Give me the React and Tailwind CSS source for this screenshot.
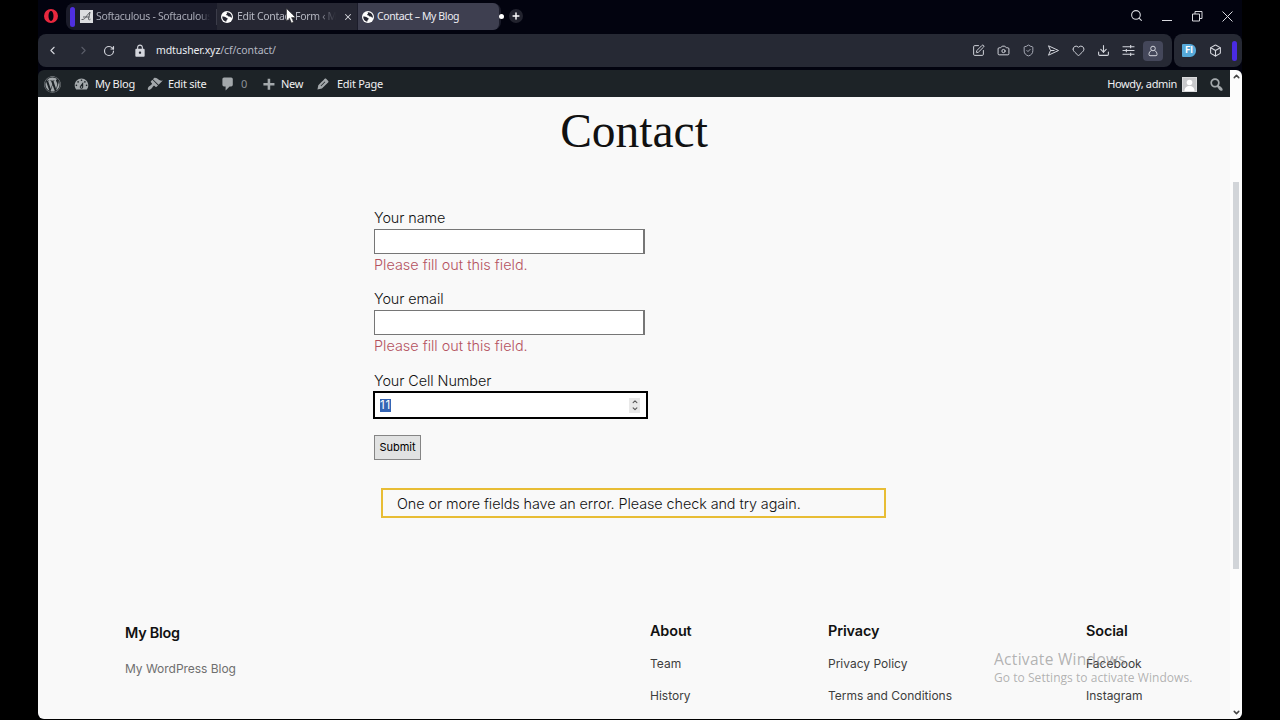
import { FaWordpress } from 'react-icons/fa';
import { MdLock } from 'react-icons/md';
import { Search, ChevronLeft, ChevronRight, RotateCw, Camera, ShieldCheck, Heart, Download, Box, X, Plus, SquarePen, ChevronUp, ChevronDown } from 'lucide-react';

const dashicons = {
  dashboard: 'M3.76 16h12.48c1.1-1.37 1.76-3.11 1.76-5 0-4.42-3.58-8-8-8s-8 3.58-8 8c0 1.89.66 3.63 1.76 5zM10 4c.55 0 1 .45 1 1s-.45 1-1 1-1-.45-1-1 .45-1 1-1zM6 6c.55 0 1 .45 1 1s-.45 1-1 1-1-.45-1-1 .45-1 1-1zm8 0c.55 0 1 .45 1 1s-.45 1-1 1-1-.45-1-1 .45-1 1-1zm-5.37 5.55L12 7v6c0 1.1-.9 2-2 2s-2-.9-2-2c0-.57.24-1.08.63-1.45zM4 10c.55 0 1 .45 1 1s-.45 1-1 1-1-.45-1-1 .45-1 1-1zm12 0c.55 0 1 .45 1 1s-.45 1-1 1-1-.45-1-1 .45-1 1-1zm-5 3c0-.55-.45-1-1-1s-1 .45-1 1 .45 1 1 1 1-.45 1-1z',
  appearance: 'M14.48 11.06L7.41 3.99l1.5-1.5c.5-.56 2.3-.47 3.51.32 1.21.8 1.43 1.28 2.91 2.1 1.18.64 2.45 1.26 4.45.85zm-.71.71L6.7 4.7 4.93 6.47c-.39.39-.39 1.02 0 1.41l1.06 1.06c.39.39.39 1.03 0 1.42-.6.6-1.43 1.11-2.21 1.69-.35.26-.7.53-1.01.84C1.43 14.23.4 16.08 1.4 17.07c.99 1 2.84-.03 4.18-1.36.31-.31.58-.66.85-1.02.57-.78 1.08-1.61 1.69-2.21.39-.39 1.02-.39 1.41 0l1.06 1.06c.39.39 1.02.39 1.41 0z',
  comment: 'M5 2h9c1.1 0 2 .9 2 2v7c0 1.1-.9 2-2 2h-2l-5 5v-5H5c-1.1 0-2-.9-2-2V4c0-1.1.9-2 2-2z',
  plus: 'M17 7v3h-5v5H9v-5H4V7h5V2h3v5h5z',
  edit: 'M13.89 3.39l2.71 2.72c.46.46.42 1.24.03 1.64l-8.01 8.02-5.56 1.16 1.16-5.58s7.6-7.63 7.99-8.03c.39-.39 1.22-.39 1.68.07zm-1.7 3.5l-5.2 5.2.7.7 5.2-5.2z',
  search: 'M12.14 4.18c1.87 1.87 2.11 4.75.72 6.89.12.1.22.21.36.31.2.16.47.36.81.59.34.24.56.39.66.47.42.31.73.57.94.78.32.32.6.65.84 1 .25.35.44.69.59 1.04.14.35.21.68.18 1-.02.32-.14.59-.36.81s-.49.34-.81.36c-.31.02-.65-.04-.99-.19-.35-.14-.7-.34-1.04-.59-.35-.24-.68-.52-1-.84-.21-.21-.47-.52-.77-.93-.1-.13-.25-.35-.47-.66-.22-.32-.4-.57-.56-.78-.16-.2-.29-.35-.44-.5-2.07 1.09-4.69.76-6.44-.98-2.14-2.15-2.14-5.64 0-7.78 2.15-2.15 5.63-2.15 7.78 0zm-1.41 6.36c1.36-1.37 1.36-3.58 0-4.95-1.37-1.37-3.59-1.37-4.95 0-1.37 1.37-1.37 3.58 0 4.95 1.36 1.37 3.58 1.37 4.95 0z',
};

const Dashicon = ({ name, className = 'size-[17px]' }) => (
  <svg viewBox="0 0 20 20" fill="#a3a8ab" className={`shrink-0 ${className}`}>
    <path fillRule={name === 'edit' ? 'evenodd' : 'nonzero'} d={dashicons[name]} />
  </svg>
);

// Default favicon of the blog tabs
const Globe = () => (
  <svg viewBox="0 0 12 12" className="size-[12px] ml-[4px] shrink-0">
    <circle cx="6" cy="6" r="6" fill="#fff" />
    <path fill="#262733" d="M5.700 1.200C7.500 1 9.800 2.200 10.600 4.400c.3 1 .3 1.700.2 2.400-1-.2-1.400-.6-1.700-1.300-.7.200-1.700.3-2-.4-.2-.6-.9-.5-1.500-.8-.8-.6-.3-1.300.3-1.600.5-.4-.3-.8-.2-1.500zM1.200 5.600c1.500 0 3.200.1 3.800.9.500.7 1.600.4 1.700 1.300.1.800-.9.800-1.100 1.500-.1.600-.1 1-.5 1.400C2.700 10.300 1.100 8.200 1.200 5.600z" />
  </svg>
);

const TabBar = () => (
  <div className="h-[34px] shrink-0 flex items-start pt-[3px] text-[10.5px] tracking-[-0.32px] whitespace-nowrap">
    <svg viewBox="0 0 14 14" className="w-[14px] h-[14px] ml-[6px] mt-[6px] shrink-0">
      <path fillRule="evenodd" fill="#e8283e" d="M7 0a7 7 0 1 0 0 14A7 7 0 0 0 7 0zm0 2.1c1.5 0 2.5 2.1 2.5 4.9S8.5 11.9 7 11.9 4.5 9.8 4.5 7 5.500 2.1 7 2.100z" />
    </svg>

    <div className="h-[27px] w-[435px] ml-[8px] flex items-center rounded-lg bg-[#1b1c2a] shrink-0">
      <div className="w-[5px] h-[20px] ml-[4px] rounded-full bg-[#4f2fe0]" />
      <div className="size-[13px] ml-[5px] bg-[#dcdde0] flex items-center justify-center">
        <svg viewBox="0 0 13 13" className="size-[13px]" fill="none" stroke="#5b5d62" strokeWidth="1">
          <path d="M1.500 9.500c2.500.5 4-1.500 5.500-4L10 2 8.500 9c0 1 1 1 2 .2M3 7h6.500" />
        </svg>
      </div>
      <div className="w-[114px] ml-[3px] text-[#a7a9b5] [mask-image:linear-gradient(to_right,black_90%,transparent)]">Softaculous - Softaculous</div>
      <div className="w-px h-[16px] ml-[6px] bg-[#3b3c49]" />
      <div className="h-full w-[140px] flex items-center bg-[#262733]">
        <Globe />
        <div className="w-[99px] ml-[4px] text-[#b6b8c2] [mask-image:linear-gradient(to_right,black_80%,transparent)]">Edit Contact Form ‹ M</div>
        <X className="size-[10px] ml-[7px] text-[#d5d6dc]" strokeWidth={2.5} />
      </div>
      <div className="h-full w-[141px] ml-px flex items-center rounded-r-md bg-[#3e3f50]">
        <Globe />
        <div className="ml-[3px] text-[#ececf2] tracking-[-0.38px]">Contact – My Blog</div>
      </div>
    </div>
    <div className="size-[5px] mt-[11px] -ml-[2px] rounded-full bg-white z-10" />
    <div className="size-[14px] ml-[5px] mt-[6px] rounded-full bg-[#22232e] flex items-center justify-center">
      <Plus className="size-[10px] text-white" strokeWidth={3.5} />
    </div>

    <div className="flex-1" />
    <Search className="size-[13px] mt-[6px] text-[#d8d9de]" strokeWidth={2} />
    <div className="w-[10px] h-px mt-[17px] ml-[19px] bg-[#d8d9de]" />
    <svg viewBox="0 0 11 11" className="size-[11px] ml-[20px] mt-[8px]" fill="none" stroke="#d8d9de">
      <path d="M.5 3h7v7h-7zM3 3V.5h7v7H7.500" />
    </svg>
    <svg viewBox="0 0 11 11" className="size-[11px] ml-[19px] mr-[9px] mt-[8px]" fill="none" stroke="#d8d9de">
      <path d="M.5.5l10 10M10.500.5l-10 10" />
    </svg>
  </div>
);

const AddressBar = () => (
  <div className="h-[33px] shrink-0 flex gap-[2px] text-[#d4d6dd]">
    <div className="w-[1134px] flex items-center rounded-lg bg-[#262934]">
      <ChevronLeft className="size-[13px] ml-[8px]" strokeWidth={2} />
      <ChevronRight className="size-[13px] ml-[18px] text-[#5a5d69]" strokeWidth={2} />
      <RotateCw className="size-[12px] ml-[13px]" strokeWidth={2.300} />
      <MdLock className="size-[14px] ml-[18px]" />
      <div className="ml-[9px] text-[10.5px] text-[#b5b8c3] tracking-[-0.09px]"><span className="text-[#eceef2]">mdtusher.xyz</span>/cf/contact/</div>
      <div className="flex-1" />
      <div className="flex items-center gap-[12px] pr-[9px]">
        <SquarePen className="size-[13px] -ml-px" strokeWidth={1.800} />
        <Camera className="size-[13px]" strokeWidth={1.800} />
        <ShieldCheck className="size-[13px] text-[#aaadb8]" strokeWidth={1.800} />
        <svg viewBox="0 0 13 13" className="size-[13px]" fill="none" stroke="currentColor" strokeLinejoin="round">
          <path d="M1.500 1.800L11.500 6.500 1.500 11.200 3.500 6.500zM3.500 6.500h4" />
        </svg>
        <Heart className="size-[13px]" strokeWidth={1.800} />
        <Download className="size-[13px]" strokeWidth={2} />
        <svg viewBox="0 0 12 12" className="w-[13px] h-[13px]" fill="none" stroke="currentColor">
          <path d="M.5 2.500h11M.5 6h11M.5 9.500h11M8 1v3M4 4.500v3M8 8v3" />
        </svg>
        <div className="size-[20px] -ml-[4px] rounded bg-[#44475a] flex items-center justify-center">
          <svg viewBox="0 0 12 12" className="size-[12px]" fill="none" stroke="currentColor">
            <circle cx="6" cy="3.500" r="2.300" />
            <path d="M4.500 5.500c-1.800.8-2.500 2.200-2.500 4 0 .8.3 1.200 1 1.200h6c.7 0 1-.4 1-1.200 0-1.800-.7-3.200-2.500-4" />
          </svg>
        </div>
      </div>
    </div>
    <div className="flex-1 flex items-center rounded-lg bg-[#262934]">
      <div className="w-[14px] h-[13px] ml-[8px] bg-[#56a9d9] rounded-[1px] rounded-r-md text-white text-[9px] leading-[13px] font-bold font-['Roboto'] text-center">FI</div>
      <Box className="size-[13px] ml-[13px]" strokeWidth={2} />
      <div className="w-[5px] h-[20px] ml-[10px] rounded-sm bg-[#4a2be2]" />
    </div>
  </div>
);

const AdminBar = () => (
  <div className="h-[27px] shrink-0 flex items-center bg-[#1d2327] rounded-tl-md pt-px text-[11px] tracking-[-0.28px] text-[#f0f0f1]">
    <FaWordpress className="size-[17px] ml-[6px] text-[#a3a8ab]" />
    <Dashicon name="dashboard" className="size-[17px] ml-[12px]" />
    <span className="ml-[5px] w-[52px]">My Blog</span>
    <Dashicon name="appearance" className="size-[16px]" />
    <span className="ml-[5px] w-[52px]">Edit site</span>
    <Dashicon name="comment" className="size-[16px]" />
    <span className="ml-[5px] w-[19px] text-[#8c9196]">0</span>
    <Dashicon name="plus" className="size-[17px] -mb-[2px]" />
    <span className="ml-[4px] w-[34px]">New</span>
    <Dashicon name="edit" className="size-[16px]" />
    <span className="ml-[6px]">Edit Page</span>
    <span className="ml-auto tracking-[-0.33px]">Howdy, admin</span>
    <div className="w-[15px] h-[15px] ml-[5px] bg-[#c8c9cb] border border-[#d9dadb]">
      <svg viewBox="0 0 13 13" fill="#fff">
        <circle cx="6.500" cy="4.500" r="2.800" />
        <path d="M1.500 13c0-3.500 2-5 5-5s5 1.500 5 5z" />
      </svg>
    </div>
    <Dashicon name="search" className="size-[17px] ml-[11px] mr-[5px]" />
  </div>
);

const Field = ({ label }) => (
  <div className="mb-[14px] h-[67px]">
    <label className="block h-[24px] leading-[25px]">{label}</label>
    <input className="block w-[271px] h-[25px] bg-white border border-[#767676] border-r-2 outline-none" />
    <p className="text-[#b4525f] leading-[22px] tracking-[0.01px]">Please fill out this field.</p>
  </div>
);

const ContactForm = () => (
  <div className="w-[520px] mx-auto mt-[48px] text-[14.400px] font-light tracking-[-0.07px] text-[#111]">
    <Field label="Your name" />
    <Field label="Your email" />
    <label className="block h-[24px] leading-[28px]">Your Cell Number</label>
    <div className="w-[275px] h-[28px] -ml-px flex items-center bg-white border-2 border-black pl-[5px] pr-[6px]">
      <span className="bg-[#3565b5] text-white text-[11.500px] leading-[13px] font-normal tracking-[0.7px]">11</span>
      <div className="ml-auto w-[11px] h-[15px] bg-[#e9e9e9] flex flex-col items-center justify-between text-[#555]">
        <ChevronUp className="size-[8px]" strokeWidth={3.500} />
        <ChevronDown className="size-[8px]" strokeWidth={3.500} />
      </div>
    </div>
    <button className="block mt-[16px] w-[47px] h-[25px] bg-[#e1e2e2] border border-[#858585] text-[11px] font-normal tracking-normal text-black">Submit</button>
    <div className="mt-[28px] ml-[7px] w-[505px] h-[30px] border-2 border-[#e8bd35] pl-[14px] leading-[27px] tracking-[-0.08px]">One or more fields have an error. Please check and try again.</div>
  </div>
);

const FooterColumn = ({ title, links, className }) => (
  <div className={className}>
    <h2 className="text-[14.400px] leading-[20px] font-semibold tracking-[-0.1px] text-[#111] mb-[14px]">{title}</h2>
    {links.map((link) => (
      <a key={link} className="block h-[32px] leading-[18px] text-[12px] text-[#3d3d3d]">{link}</a>
    ))}
  </div>
);

const Footer = () => (
  <div className="mt-[103px] ml-[87px] flex whitespace-nowrap">
    <div className="w-[525px] pt-[2px]">
      <h2 className="text-[14.400px] leading-[20px] font-semibold tracking-[-0.25px] text-[#111] mb-[17px]">My Blog</h2>
      <p className="text-[12px] leading-[18px] tracking-[-0.03px] text-[#6f6f6f]">My WordPress Blog</p>
    </div>
    <FooterColumn title="About" links={['Team', 'History']} className="w-[178px]" />
    <FooterColumn title="Privacy" links={['Privacy Policy', 'Terms and Conditions']} className="w-[258px]" />
    <FooterColumn title="Social" links={['Facebook', 'Instagram']} />
  </div>
);

const App = () => (
  <div className="relative w-[1280px] h-[720px] overflow-hidden bg-black px-[38px] font-['Noto_Sans',sans-serif]">
    <div className="h-[719px] flex flex-col bg-[#02030f] rounded-b-md overflow-hidden">
      <TabBar />
      <AddressBar />

      <div className="flex-1 min-h-0 mt-[3px] flex">
        <div className="w-[1192px] flex flex-col">
          <AdminBar />
          <main className="flex-1 min-h-0 overflow-hidden bg-[#f9f9f9] font-['Inter',sans-serif]">
            <h1 className="pt-[8px] h-[60px] text-center font-['Liberation_Serif',serif] text-[47.500px] leading-[52px] text-[#111]">Contact</h1>
            <ContactForm />
            <Footer />
          </main>
        </div>

        {/* Scrollbar */}
        <div className="w-[12px] bg-[#fcfcfc] rounded-tr-md flex flex-col items-center">
          <ChevronUp className="size-[9px] mt-[2px] text-[#444]" strokeWidth={4} />
          <div className="w-[6px] h-[387px] mt-[101px] bg-[#d2d5d9]" />
          <ChevronDown className="size-[9px] mt-auto mb-[2px] text-[#444]" strokeWidth={4} />
        </div>
      </div>
    </div>

    {/* Windows activation watermark */}
    <div className="absolute left-[994px] top-[649px] whitespace-nowrap text-[#8a8a8a]/65 font-['Open_Sans',sans-serif]">
      <p className="text-[15.500px] leading-[20px] tracking-[0.3px]">Activate Windows</p>
      <p className="text-[12px] leading-[18px] tracking-[0.05px]">Go to Settings to activate Windows.</p>
    </div>

    {/* Mouse cursor */}
    <svg viewBox="0 0 10 16" className="absolute left-[286px] top-[8px] w-[10px] h-[16px]">
      <path d="M.5.5v12.500l3-2.800 2 4.800 2-.9-2-4.600h4z" fill="#fff" stroke="#222" strokeWidth=".5" />
    </svg>
  </div>
);

export default App;
